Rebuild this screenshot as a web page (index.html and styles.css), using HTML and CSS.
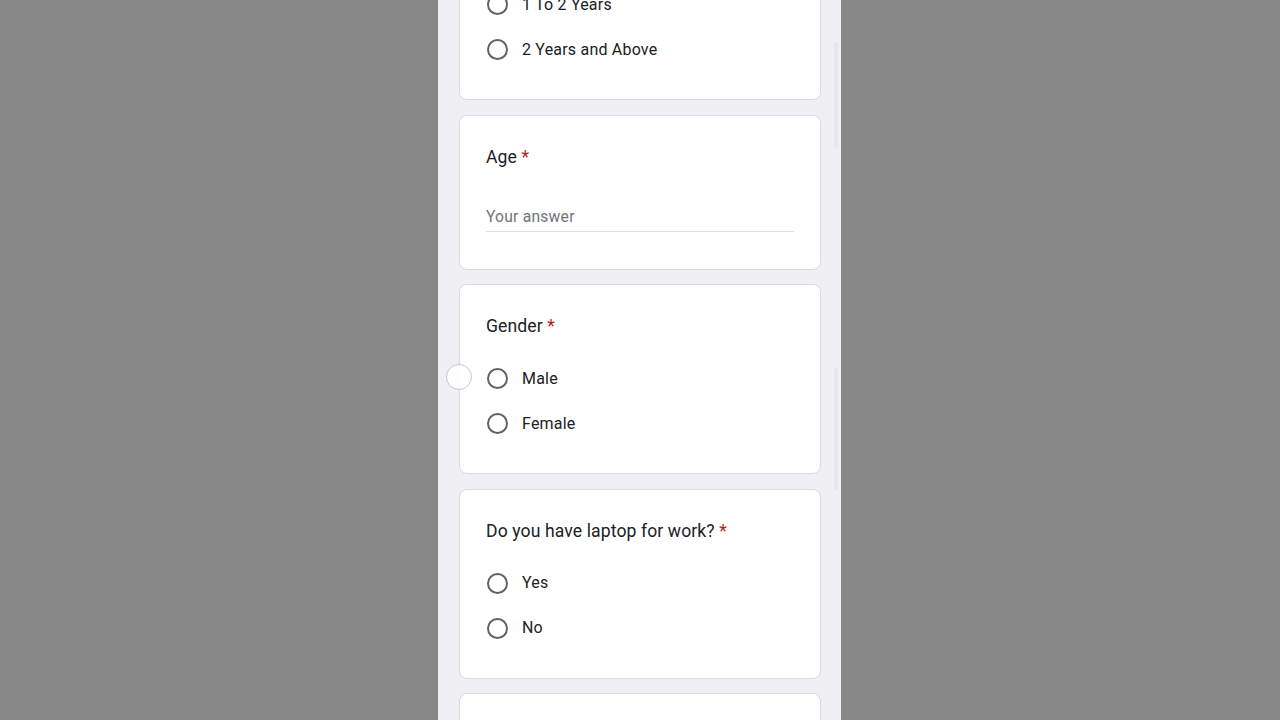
FILE: index.html
```html
<!DOCTYPE html>
<html lang="en">
<head>
<meta charset="utf-8">
<title>Form</title>
<link rel="stylesheet" href="styles.css">
</head>
<body>
<div class="screen">
  <div class="form">
    <section class="card">
      <h2 class="q-title">Work Experience <span class="req">*</span></h2>
      <div class="options">
        <label class="opt"><span class="radio"></span><span class="opt-text">1 To 2 Years</span></label>
        <label class="opt"><span class="radio"></span><span class="opt-text">2 Years and Above</span></label>
      </div>
    </section>
    <section class="card card-text">
      <h2 class="q-title">Age <span class="req">*</span></h2>
      <div class="answer">Your answer</div>
    </section>
    <section class="card">
      <h2 class="q-title">Gender <span class="req">*</span></h2>
      <div class="options">
        <label class="opt"><span class="ripple"></span><span class="radio"></span><span class="opt-text">Male</span></label>
        <label class="opt"><span class="radio"></span><span class="opt-text">Female</span></label>
      </div>
    </section>
    <section class="card">
      <h2 class="q-title">Do you have laptop for work? <span class="req">*</span></h2>
      <div class="options">
        <label class="opt"><span class="radio"></span><span class="opt-text">Yes</span></label>
        <label class="opt"><span class="radio"></span><span class="opt-text">No</span></label>
      </div>
    </section>
    <section class="card">
      <h2 class="q-title">Address <span class="req">*</span></h2>
    </section>
  </div>
  <div class="thumb thumb-a"></div>
  <div class="thumb thumb-b"></div>
</div>
</body>
</html>
```
FILE: styles.css
```css
html, body {
  margin: 0;
  padding: 0;
}
body {
  background: #878787;
  height: 720px;
  overflow: hidden;
  font-family: Roboto, "Noto Sans", Arial, sans-serif;
  color: #202124;
}
.screen {
  position: relative;
  width: 403px;
  height: 720px;
  margin-left: calc(50% - 202px);
  box-sizing: border-box;
  padding: 0 20px 0 21px;
  background: #f0eff4;
  overflow: hidden;
}
.form {
  display: flex;
  flex-direction: column;
  gap: 14.5px;
  margin-top: -90px;
}
.card {
  background: #fff;
  border: 1px solid #dadce0;
  border-radius: 8px;
  padding: 29px 26px 27px;
}
.q-title {
  margin: 0;
  font-weight: 400;
  font-size: 17.6px;
  line-height: 24px;
  letter-spacing: 0.1px;
}
.req {
  color: #b3261e;
}
.options {
  margin-top: 18px;
  display: flex;
  flex-direction: column;
}
.opt {
  position: relative;
  height: 45px;
  display: flex;
  align-items: center;
  gap: 14px;
  padding-left: 1px;
}
.radio {
  width: 21px;
  height: 21px;
  box-sizing: border-box;
  border: 2px solid #5f6368;
  border-radius: 50%;
  flex: none;
}
.opt-text {
  font-size: 16px;
  line-height: 20px;
  letter-spacing: 0.2px;
}
.ripple {
  position: absolute;
  left: -40px;
  top: 8px;
  width: 26px;
  height: 26px;
  box-sizing: border-box;
  border-radius: 50%;
  border: 1.5px solid #c8c5db;
  background: rgba(255, 255, 255, 0.9);
}
.card-text {
  padding-bottom: 37px;
}
.answer {
  margin-top: 38px;
  font-size: 15.7px;
  line-height: 20px;
  color: #70757a;
  letter-spacing: 0.2px;
  padding-bottom: 4px;
  border-bottom: 1px solid #e0e0e0;
}
.thumb {
  position: absolute;
  left: 396px;
  width: 4px;
  border-radius: 2px;
  background: #e7e6eb;
}
.thumb-a {
  top: 42px;
  height: 106px;
}
.thumb-b {
  top: 367px;
  height: 123px;
}
```
